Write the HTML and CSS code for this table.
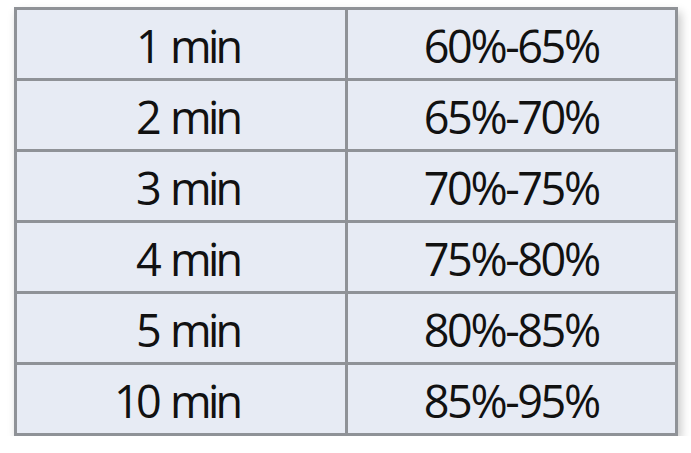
FILE: index.html
```html
<!DOCTYPE html>
<html>
<head>
<meta charset="utf-8">
<link rel="stylesheet" href="styles.css">
</head>
<body>
<div class="grid">
  <div class="cell left">1 min</div><div class="cell right">60%-65%</div>
  <div class="cell left">2 min</div><div class="cell right">65%-70%</div>
  <div class="cell left">3 min</div><div class="cell right">70%-75%</div>
  <div class="cell left">4 min</div><div class="cell right">75%-80%</div>
  <div class="cell left">5 min</div><div class="cell right">80%-85%</div>
  <div class="cell left">10 min</div><div class="cell right">85%-95%</div>
</div>
</body>
</html>
```

FILE: styles.css
```css
html, body {
  margin: 0;
  background: #ffffff;
}
body {
  padding: 7px 0 0 14px;
  font-family: "Open Sans", "Noto Sans", sans-serif;
}
.grid {
  width: 658px;
  display: grid;
  grid-template-columns: 1fr 1fr;
  grid-template-rows: repeat(6, 68px);
  gap: 3px;
  background: #8f9297;
  border: 3px solid #8f9297;
  box-shadow: 3px 5px 9px rgba(0, 0, 0, 0.22);
}
.cell {
  background: #e7ebf4;
  color: #111111;
  font-size: 45px;
  display: flex;
  align-items: center;
  padding-top: 3px;
}
.left {
  justify-content: flex-end;
  padding-right: 105px;
  letter-spacing: -3.7px;
  word-spacing: 4px;
}
.right {
  justify-content: center;
  letter-spacing: -2.4px;
}
```
